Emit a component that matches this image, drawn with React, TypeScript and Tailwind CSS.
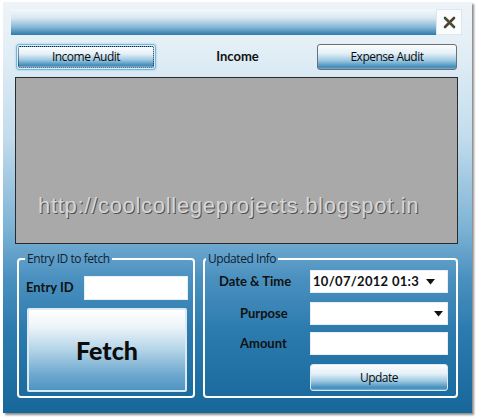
import React from "react";

const ui = { fontFamily: '"Open Sans", "Noto Sans", sans-serif' };
const bold = { fontFamily: 'Lato, "Noto Sans", sans-serif' };

function GlossButton({
  label,
  className,
  textClass,
  textStyle,
}: {
  label: string;
  className: string;
  textClass: string;
  textStyle?: React.CSSProperties;
}) {
  return (
    <button
      className={`flex items-center justify-center bg-[linear-gradient(to_bottom,#fbfdfe_0%,#e4f0f7_35%,#9cc8e1_65%,#3f8bbb_92%,#79b0d2_100%)] ${className}`}
    >
      <span className={textClass} style={textStyle}>
        {label}
      </span>
    </button>
  );
}

function Arrow() {
  return (
    <svg width="9" height="6" viewBox="0 0 9 6">
      <path d="M0 0 H9 L4.5 5.5 Z" fill="#111" />
    </svg>
  );
}

export default function App() {
  return (
    <div className="w-[478px] h-[420px] bg-white pt-[2px] pl-[3px] overflow-hidden">
      <div className="w-[469px] h-[411px] pt-[7px] pl-[8px] bg-[linear-gradient(to_bottom,#eef4f8_0%,#e2eef6_12%,#c2dcec_33%,#7db3d5_55%,#4b91c0_67%,#2c7bae_80%,#17679b_100%)] shadow-[2px_2px_2px_rgba(0,0,0,0.45)]">
        {/* title bar */}
        <div className="w-[451px] h-[26px] flex justify-end bg-[linear-gradient(to_bottom,#f4f8fb_0%,#d6e7f2_35%,#86b7d6_70%,#2c7aab_100%)]">
          <div className="w-[26px] h-[26px] bg-[#fbfcfd] border border-[#dfe6ec] flex items-center justify-center">
            <svg width="13" height="13" viewBox="0 0 13 13">
              <path
                d="M2 2 L11 11 M11 2 L2 11"
                stroke="#4a4434"
                strokeWidth="2.6"
                strokeLinecap="round"
              />
              <path
                d="M2.5 2.5 L10.5 10.5"
                stroke="#2f6a3a"
                strokeWidth="1.1"
                strokeLinecap="round"
                opacity="0.7"
              />
              <path
                d="M10.5 2.5 L2.5 10.5"
                stroke="#7a2f2a"
                strokeWidth="1.1"
                strokeLinecap="round"
                opacity="0.6"
              />
            </svg>
          </div>
        </div>

        <div className="ml-[4px] w-[443px]">
          {/* top buttons */}
          <div className="mt-[9px] h-[26px] flex items-center justify-between px-[1px]">
            <div className="w-[140px] h-[26px] rounded-[3px] border border-[#6cb8e2] shadow-[0_0_2px_#7cc4ea] p-[1px]">
              <GlossButton
                label="Income Audit"
                className="w-full h-full rounded-[2px] border border-dotted border-[#222]"
                textClass="text-[12px] text-[#0a0a0a] tracking-[-0.5px]"
                textStyle={ui}
              />
            </div>
            <span className="text-[13px] font-bold text-[#111] pl-[2px]" style={bold}>
              Income
            </span>
            <GlossButton
              label="Expense Audit"
              className="w-[140px] h-[26px] rounded-[3px] border border-[#6f6f6f]"
              textClass="text-[12px] text-[#0a0a0a] tracking-[-0.5px]"
              textStyle={ui}
            />
          </div>

          {/* display panel */}
          <div className="mt-[7px] h-[167px] bg-[#a9a9a9] border border-[#2b2b2b] flex items-end pl-[22px] pb-[26px]">
            <span
              className="text-[22px] leading-none tracking-[0.7px] text-[#d6d6d6] [text-shadow:1px_1px_0_#4f4f4f]"
              style={{ fontFamily: '"Liberation Sans", Arial, sans-serif' }}
            >
              http://coolcollegeprojects.blogspot.in
            </span>
          </div>

          {/* group boxes */}
          <div className="mt-[7px] flex">
            <fieldset className="ml-[2px] w-[178px] h-[147px] border-2 border-white rounded-[4px] pl-[7px] pr-[5px]">
              <legend
                className="ml-[-1px] px-[2px] text-[12px] leading-[15px] text-[#0f2233] tracking-[-0.45px]"
                style={ui}
              >
                Entry ID to fetch
              </legend>
              <div className="mt-[10px] flex items-center justify-between h-[24px]">
                <span className="text-[13px] font-bold text-[#111]" style={bold}>
                  Entry ID
                </span>
                <div className="w-[104px] h-[24px] bg-white border border-[#e8eef2]" />
              </div>
              <GlossButton
                label="Fetch"
                className="mt-[8px] ml-[1px] w-[160px] h-[84px] rounded-[2px] border-2 border-[#dbe9f2] bg-[linear-gradient(to_bottom,#ffffff_0%,#eef5f9_20%,#b3d4e7_50%,#6fa9cf_80%,#4f95c4_100%)]"
                textClass="text-[25px] font-black text-[#0c0c0c] pt-[2px]"
                textStyle={bold}
              />
            </fieldset>

            <fieldset className="ml-[8px] w-[255px] h-[147px] border-2 border-white rounded-[4px] pr-[8px]">
              <legend
                className="ml-[1px] px-[2px] text-[12px] leading-[15px] text-[#0f2233] tracking-[-0.45px]"
                style={ui}
              >
                Updated Info
              </legend>
              <div className="mt-[4px] flex items-center h-[23px]">
                <span className="ml-[14px] w-[91px] text-[13px] font-bold text-[#111]" style={bold}>
                  Date &amp; Time
                </span>
                <div className="w-[138px] h-[23px] bg-white border border-[#e8eef2] flex items-center pl-[2px] pr-[12px] justify-between">
                  <span className="text-[13px] font-bold text-[#111] tracking-[0.3px]" style={bold}>
                    10/07/2012 01:3
                  </span>
                  <Arrow />
                </div>
              </div>
              <div className="mt-[9px] flex items-center h-[23px]">
                <span className="ml-[35px] w-[70px] text-[13px] font-bold text-[#111]" style={bold}>
                  Purpose
                </span>
                <div className="w-[138px] h-[23px] bg-white border border-[#e8eef2] flex items-center justify-end pr-[4px]">
                  <Arrow />
                </div>
              </div>
              <div className="mt-[7px] flex items-center h-[23px]">
                <span className="ml-[35px] w-[70px] text-[13px] font-bold text-[#111]" style={bold}>
                  Amount
                </span>
                <div className="w-[138px] h-[23px] bg-white border border-[#e8eef2]" />
              </div>
              <div className="mt-[9px] flex">
                <GlossButton
                  label="Update"
                  className="ml-[105px] w-[138px] h-[27px] rounded-[3px] border border-[#dbe9f2]"
                  textClass="text-[12px] text-[#0a0a0a] tracking-[-0.5px]"
                  textStyle={ui}
                />
              </div>
            </fieldset>
          </div>
        </div>
      </div>
    </div>
  );
}
